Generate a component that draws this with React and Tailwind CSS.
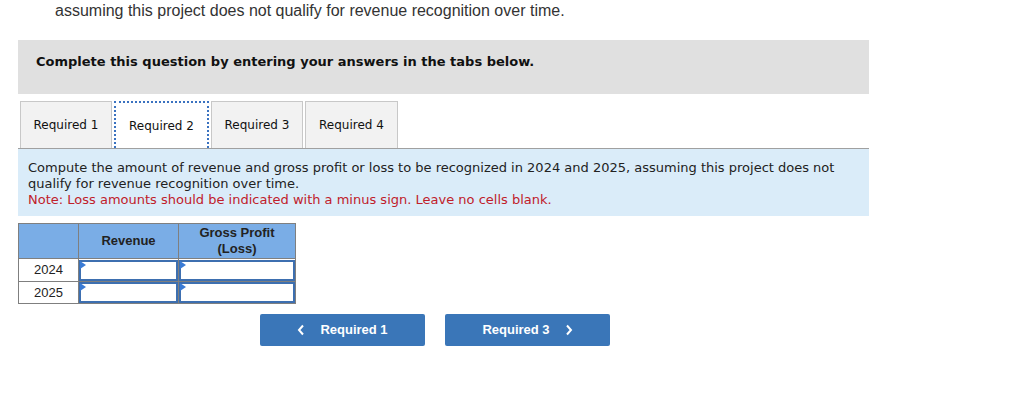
import React from "react";

function Tab({ label, active, w }) {
  return (
    <div
      className={
        (active
          ? "h-[47px] flex items-center justify-center bg-white border-2 border-dotted border-[#3a72c0] border-b-0 text-[12px] text-[#111] "
          : "h-[47px] flex items-center justify-center bg-[#f2f2f2] border border-[#c8c8c8] border-b-0 text-[12px] text-[#111] ") + w
      }
      style={{ fontFamily: '"DejaVu Sans", Verdana, sans-serif' }}
    >
      {label}
    </div>
  );
}

function InputCell() {
  return (
    <td className="border border-[#7f7f7f] p-0 h-full">
      <div className="relative h-[21px] border-2 border-[#3d6fb0] bg-white">
        <div className="absolute left-[-1px] top-[-1px] w-0 h-0 border-t-[4px] border-b-[4px] border-l-[6px] border-t-transparent border-b-transparent border-l-[#3a7bd5]" />
      </div>
    </td>
  );
}

export default function App() {
  return (
    <div className="w-[1019px] h-[419px] bg-white overflow-hidden">
      <div
        className="pl-[55px] pt-[1px] h-[40px] text-[16px] leading-[20px] text-[#333]"
        style={{ fontFamily: '"Liberation Sans", Arial, sans-serif' }}
      >
        assuming this project does not qualify for revenue recognition over time.
      </div>
      <div
        className="ml-[18px] w-[851px] h-[54px] bg-[#e0e0e0] pl-[18px] pt-[14px] text-[13px] leading-[16px] font-bold text-[#111]"
        style={{ fontFamily: '"DejaVu Sans", Verdana, sans-serif' }}
      >
        Complete this question by entering your answers in the tabs below.
      </div>
      <div className="ml-[20px] mt-[7px] flex items-end gap-[2px]">
        <Tab label="Required 1" w="w-[92px]" />
        <Tab label="Required 2" w="w-[95px]" active />
        <Tab label="Required 3" w="w-[92px]" />
        <Tab label="Required 4" w="w-[93px]" />
      </div>
      <div
        className="ml-[18px] w-[851px] h-[68px] bg-[#daecf9] border-t border-[#a0a0a0] pl-[10px] pr-[20px] pt-[11px] text-[13px] leading-[16px] text-[#222]"
        style={{ fontFamily: '"DejaVu Sans", Verdana, sans-serif' }}
      >
        <div>
          Compute the amount of revenue and gross profit or loss to be recognized in 2024 and 2025, assuming this project does not qualify for revenue recognition over time.
        </div>
        <div className="text-[#c0202a]">
          Note: Loss amounts should be indicated with a minus sign. Leave no cells blank.
        </div>
      </div>
      <div className="ml-[18px] mt-[7px]" style={{ fontFamily: '"Liberation Sans", Arial, sans-serif' }}>
        <table className="border-collapse text-[13px]">
          <thead>
            <tr className="h-[35px] bg-[#7aade6]">
              <th className="w-[60px] border border-[#7f7f7f] p-0"></th>
              <th className="w-[100px] border border-[#7f7f7f] font-bold text-[#222] leading-[16px] p-0">Revenue</th>
              <th className="w-[117px] border border-[#7f7f7f] font-bold text-[#222] leading-[16px] p-0">
                Gross Profit
                <br />
                (Loss)
              </th>
            </tr>
          </thead>
          <tbody>
            <tr className="h-[23px]">
              <td className="border border-[#7f7f7f] text-center text-[#222] p-0">2024</td>
              <InputCell />
              <InputCell />
            </tr>
            <tr className="h-[22px]">
              <td className="border border-[#7f7f7f] text-center text-[#222] p-0">2025</td>
              <InputCell />
              <InputCell />
            </tr>
          </tbody>
        </table>
      </div>
      <div
        className="ml-[260px] mt-[10px] flex gap-[20px] text-[13px] font-bold text-white"
        style={{ fontFamily: '"Liberation Sans", Arial, sans-serif' }}
      >
        <div className="w-[165px] h-[32px] bg-[#3a76b8] rounded-[2px] flex items-center justify-center gap-[15px]">
          <svg width="8" height="12" viewBox="0 0 8 12" fill="none" stroke="white" strokeWidth="2">
            <path d="M6 1.5 L2 6 L6 10.5" />
          </svg>
          <span>Required 1</span>
        </div>
        <div className="w-[165px] h-[32px] bg-[#3a76b8] rounded-[2px] flex items-center justify-center gap-[15px]">
          <span>Required 3</span>
          <svg width="8" height="12" viewBox="0 0 8 12" fill="none" stroke="white" strokeWidth="2">
            <path d="M2 1.5 L6 6 L2 10.5" />
          </svg>
        </div>
      </div>
    </div>
  );
}
